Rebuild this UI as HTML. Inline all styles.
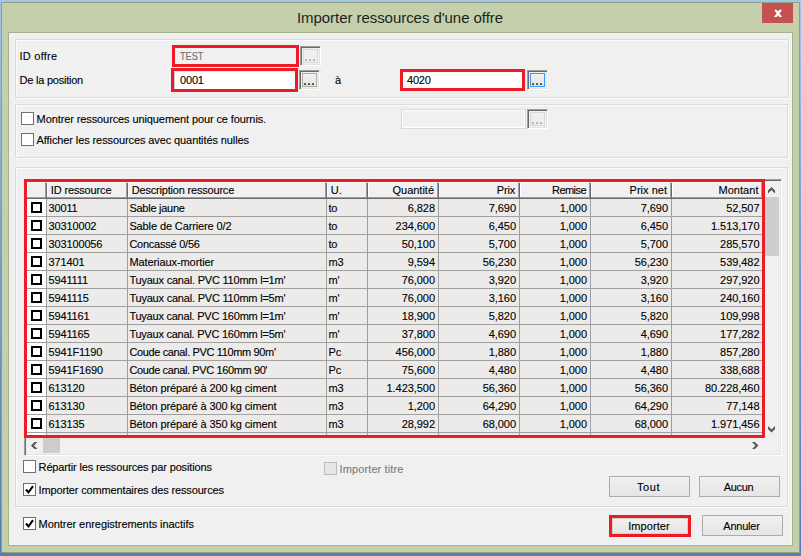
<!DOCTYPE html><html><head><meta charset="utf-8"><title>Importer ressources d'une offre</title><style>html,body{margin:0;padding:0}
body{width:801px;height:556px;position:relative;overflow:hidden;background:linear-gradient(#a3c6ee,#729bc8 49%,#5080b6);font-family:"Liberation Sans",sans-serif;font-size:11px;color:#000;-webkit-text-stroke:0.12px}
div,i,span{box-sizing:content-box}
.win{position:absolute;left:1px;top:2px;width:797px;height:549px;border:1px solid #939f79;background:#c3d0ab}
.title{-webkit-text-stroke:0;position:absolute;left:-0.5px;top:6px;width:797px;text-align:center;font-size:15px;line-height:18px;color:#1e1e1e;letter-spacing:-0.05px}
.close{position:absolute;left:760px;top:0;width:31px;height:20px;background:#c75050}
.close svg{display:block}
.client{position:absolute;left:8px;top:32px;width:783px;height:512px;border:1px solid #a6b28c;background:#f0f0f0;box-shadow:inset -1px -1px 0 #f6f6f8}
.gb{position:absolute;border:1px solid #dcdcdc;box-shadow:1px 1px 0 #fbfbfb, inset 1px 1px 0 #fbfbfb}
.t{position:absolute;white-space:nowrap;line-height:13px;height:13px;letter-spacing:-0.1px}
.t.r{text-align:right}
.dis{color:#6d6d6d}
.dis2{color:#7d7d7d}
.red{position:absolute;border:3px solid #ed1c24}
.redf{position:absolute;border:3px solid #ed1c24}
.inb{position:absolute;left:0;top:0;right:0;bottom:0;border-left:1px solid #c5cbd3;border-top:1px solid #e8eaee}
.sunk{position:absolute;width:19px;height:18px;border:1px solid;border-color:#a0a0a0 #fff #fff #a0a0a0;box-shadow:inset 1px 1px 0 #696969, inset -1px -1px 0 #e3e3e3;background:#f0f0f0}
.db{position:absolute;left:2px;top:2px;width:13px;height:12px;border:1px solid #acacac;background:linear-gradient(#f0f0f0,#e5e5e5);overflow:hidden}
.db span{position:absolute;left:0px;top:0px;font-size:14px;line-height:13px;letter-spacing:0.11px}
.db.d{border-color:#d9d9d9;background:#efefef;color:#9a9a9a}
.db.f{border-color:#3399ff}
.distb{position:absolute;border:1px solid #fff;box-shadow:0 0 0 1px #d9d9d9;background:#f0f0f0;margin:1px}
.cb{position:absolute;width:11px;height:11px;overflow:hidden;border:1px solid #707070;background:#fff}
.cb.x{border-color:#bcbcbc;background:#e6e6e6}
.cb svg{display:block}
.grid{position:absolute;left:27px;top:182px;width:735px;height:253px;background:#fff;overflow:hidden}
.hc{position:absolute;top:0;height:15px;line-height:17px;border-right:1px solid #a0a0a0;border-bottom:1px solid #a0a0a0;box-shadow:1px 1px 0 #696969, inset 1px 1px 0 #fff;background:#f0f0f0;white-space:nowrap;overflow:hidden;text-indent:3.8px;letter-spacing:-0.1px}
.hc.r{text-align:right;text-indent:0;padding-right:3px}
.row{position:absolute;left:0;width:735px;height:18px}
.c0{position:absolute;top:0;height:17px;background:#fff;border-right:1px solid #a0a0a0;border-bottom:1px solid #a0a0a0}
.rcb{position:absolute;left:4px;top:3px;width:7px;height:7px;border:2px solid #000;background:#fff}
.c{position:absolute;top:0;height:17px;line-height:19px;background:#ecebea;border-right:1px solid #a0a0a0;border-bottom:1px solid #a0a0a0;white-space:nowrap;overflow:hidden;letter-spacing:-0.1px}
.c>span{padding-left:1.4px}
.c.r{text-align:right}
.c.r>span{padding-right:3px}
.gframe{position:absolute;left:24px;top:179px;width:756px;height:275px;border:1px solid;border-color:#a0a0a0 #fff #fff #a0a0a0;box-shadow:inset 1px 1px 0 #696969, inset -1px -1px 0 #e3e3e3;background:#f0f0f0}
.vsb{position:absolute;left:765px;top:181px;width:15px;height:257px;background:#f0f0f0}
.vsb svg,.hsb svg{position:absolute;display:block}
.au{left:3px;top:6px}
.ad{left:3px;top:245px}
.vth{position:absolute;left:0;top:16px;width:14px;height:59px;background:#cdcdcd}
.hsb{position:absolute;left:26px;top:438px;width:739px;height:16px;background:#f0f0f0}
.al{left:5px;top:4px}
.ar{left:726px;top:4px}
.hth{position:absolute;left:17px;top:0;width:17px;height:15px;background:#cdcdcd}
.btn{position:absolute;border:1px solid #acacac;background:linear-gradient(#f0f0f0,#e5e5e5);text-align:center;letter-spacing:-0.05px}
.hl{position:absolute;left:0;top:16px;width:735px;height:1px;background:#696969}
</style></head><body>
<div class="win"><div class="title">Importer ressources d'une offre</div>
<div class="close"><svg width="31" height="20" viewBox="0 0 31 20"><clipPath id="cx"><rect x="0" y="6.8" width="31" height="7.2"/></clipPath><path clip-path="url(#cx)" d="M13 6.3L19.1 14.5M19.1 6.3L13 14.5" stroke="#fff" stroke-width="2.2" fill="none"/></svg></div>
</div>
<div class="client"></div>
<div class="gb" style="left:15px;top:39px;width:772px;height:57px"></div>
<div class="gb" style="left:15px;top:104px;width:771px;height:52px"></div>
<div class="gb" style="left:15px;top:167px;width:771px;height:338px"></div>
<div class="t " style="left:19.5px;top:50px;"><span style="letter-spacing:0.241px">ID offre</span></div>
<div class="t " style="left:19.5px;top:74px;"><span style="letter-spacing:-0.225px">De la position</span></div>
<div class="t " style="left:335px;top:74px;">à</div>
<div class="red" style="left:172px;top:45px;width:121px;height:16px;background:#f0f0f0"></div>
<div class="t dis" style="left:180px;top:50px;"><span style="display:inline-block;transform:scaleX(0.84);transform-origin:0 0">TEST</span></div>
<div class="red" style="left:171px;top:68px;width:121px;height:18px;background:#fff"><i class="inb"></i></div>
<div class="t " style="left:180px;top:74px;"><span style="letter-spacing:-0.171px">0001</span></div>
<div class="red" style="left:400px;top:69px;width:119px;height:16px;background:#fff"></div>
<div class="t " style="left:407px;top:74px;"><span style="letter-spacing:-0.221px">4020</span></div>
<div class="sunk" style="left:300px;top:46px"><div class="db d"><span>...</span></div></div>
<div class="sunk" style="left:299px;top:70px"><div class="db n"><span>...</span></div></div>
<div class="sunk" style="left:527px;top:70px"><div class="db f"><span>...</span></div></div>
<div class="sunk" style="left:527px;top:109px"><div class="db d"><span>...</span></div></div>
<div class="distb" style="left:401px;top:109px;width:121px;height:16px"></div>
<div class="cb " style="left:21px;top:112px"></div>
<div class="t " style="left:36.6px;top:113px;"><span style="letter-spacing:-0.102px">Montrer ressources uniquement pour ce fournis.</span></div>
<div class="cb " style="left:21px;top:133px"></div>
<div class="t " style="left:36.6px;top:134px;"><span style="letter-spacing:-0.101px">Afficher les ressources avec quantités nulles</span></div>
<div class="cb " style="left:23px;top:460px"></div>
<div class="t " style="left:38.6px;top:461px;"><span style="letter-spacing:-0.144px">Répartir les ressources par positions</span></div>
<div class="cb ck" style="left:23px;top:483px"><svg width="11" height="11" viewBox="0 0 11 11"><path d="M2 5.5l2.5 2.8L9 2.2" stroke="#000" stroke-width="2" fill="none"/></svg></div>
<div class="t " style="left:38.6px;top:484px;"><span style="letter-spacing:-0.154px">Importer commentaires des ressources</span></div>
<div class="cb ck" style="left:23px;top:517px"><svg width="11" height="11" viewBox="0 0 11 11"><path d="M2 5.5l2.5 2.8L9 2.2" stroke="#000" stroke-width="2" fill="none"/></svg></div>
<div class="t " style="left:38.6px;top:518px;"><span style="letter-spacing:-0.057px">Montrer enregistrements inactifs</span></div>
<div class="cb x" style="left:324px;top:462px"></div>
<div class="t dis2" style="left:339.5px;top:463px;"><span style="letter-spacing:0.117px">Importer titre</span></div>
<div class="gframe"></div>
<div class="grid">
<div class="hc " style="left:0px;width:18px;padding-right:0px"></div>
<div class="hc " style="left:20px;width:79px;padding-right:0px"><span style="letter-spacing:-0.147px">ID ressource</span></div>
<div class="hc " style="left:101px;width:197px;padding-right:0px"><span style="letter-spacing:-0.194px">Description ressource</span></div>
<div class="hc " style="left:300px;width:39px;padding-right:0px">U.</div>
<div class="hc r" style="left:341px;width:66px;padding-right:3px"><span style="letter-spacing:-0.012px">Quantité</span></div>
<div class="hc r" style="left:412px;width:76px;padding-right:3px"><span style="letter-spacing:-0.188px">Prix</span></div>
<div class="hc r" style="left:493px;width:66px;padding-right:3px"><span style="letter-spacing:-0.549px">Remise</span></div>
<div class="hc r" style="left:564px;width:76px;padding-right:3px"><span style="letter-spacing:0.013px">Prix net</span></div>
<div class="hc r" style="left:645px;width:86.5px;padding-right:2.5px"><span style="letter-spacing:0.036px">Montant</span></div>
<div class="hl"></div>
<div class="row" style="top:17px">
<div class="c0" style="left:0;width:19px"><i class="rcb"></i></div>
<div class="c " style="left:20px;width:80px"><span><span style="letter-spacing:-0.12px">30011</span></span></div>
<div class="c " style="left:101px;width:198px"><span><span style="letter-spacing:-0.255px">Sable jaune</span></span></div>
<div class="c " style="left:300px;width:40px"><span><span style="letter-spacing:-0.1px">to</span></span></div>
<div class="c r" style="left:341px;width:70px"><span><span style="letter-spacing:-0.05px">6,828</span></span></div>
<div class="c r" style="left:412px;width:80px"><span><span style="letter-spacing:-0.05px">7,690</span></span></div>
<div class="c r" style="left:493px;width:70px"><span><span style="letter-spacing:-0.05px">1,000</span></span></div>
<div class="c r" style="left:564px;width:80px"><span><span style="letter-spacing:-0.05px">7,690</span></span></div>
<div class="c r" style="left:645px;width:90px"><span style="padding-right:2.5px"><span style="letter-spacing:-0.05px">52,507</span></span></div>
</div>
<div class="row" style="top:35px">
<div class="c0" style="left:0;width:19px"><i class="rcb"></i></div>
<div class="c " style="left:20px;width:80px"><span><span style="letter-spacing:-0.12px">30310002</span></span></div>
<div class="c " style="left:101px;width:198px"><span><span style="letter-spacing:-0.117px">Sable de Carriere 0/2</span></span></div>
<div class="c " style="left:300px;width:40px"><span><span style="letter-spacing:-0.1px">to</span></span></div>
<div class="c r" style="left:341px;width:70px"><span><span style="letter-spacing:-0.05px">234,600</span></span></div>
<div class="c r" style="left:412px;width:80px"><span><span style="letter-spacing:-0.05px">6,450</span></span></div>
<div class="c r" style="left:493px;width:70px"><span><span style="letter-spacing:-0.05px">1,000</span></span></div>
<div class="c r" style="left:564px;width:80px"><span><span style="letter-spacing:-0.05px">6,450</span></span></div>
<div class="c r" style="left:645px;width:90px"><span style="padding-right:2.5px"><span style="letter-spacing:-0.05px">1.513,170</span></span></div>
</div>
<div class="row" style="top:53px">
<div class="c0" style="left:0;width:19px"><i class="rcb"></i></div>
<div class="c " style="left:20px;width:80px"><span><span style="letter-spacing:-0.12px">303100056</span></span></div>
<div class="c " style="left:101px;width:198px"><span><span style="letter-spacing:-0.238px">Concassé 0/56</span></span></div>
<div class="c " style="left:300px;width:40px"><span><span style="letter-spacing:-0.1px">to</span></span></div>
<div class="c r" style="left:341px;width:70px"><span><span style="letter-spacing:-0.05px">50,100</span></span></div>
<div class="c r" style="left:412px;width:80px"><span><span style="letter-spacing:-0.05px">5,700</span></span></div>
<div class="c r" style="left:493px;width:70px"><span><span style="letter-spacing:-0.05px">1,000</span></span></div>
<div class="c r" style="left:564px;width:80px"><span><span style="letter-spacing:-0.05px">5,700</span></span></div>
<div class="c r" style="left:645px;width:90px"><span style="padding-right:2.5px"><span style="letter-spacing:-0.05px">285,570</span></span></div>
</div>
<div class="row" style="top:71px">
<div class="c0" style="left:0;width:19px"><i class="rcb"></i></div>
<div class="c " style="left:20px;width:80px"><span><span style="letter-spacing:-0.12px">371401</span></span></div>
<div class="c " style="left:101px;width:198px"><span><span style="letter-spacing:-0.082px">Materiaux-mortier</span></span></div>
<div class="c " style="left:300px;width:40px"><span><span style="letter-spacing:-0.1px">m3</span></span></div>
<div class="c r" style="left:341px;width:70px"><span><span style="letter-spacing:-0.05px">9,594</span></span></div>
<div class="c r" style="left:412px;width:80px"><span><span style="letter-spacing:-0.05px">56,230</span></span></div>
<div class="c r" style="left:493px;width:70px"><span><span style="letter-spacing:-0.05px">1,000</span></span></div>
<div class="c r" style="left:564px;width:80px"><span><span style="letter-spacing:-0.05px">56,230</span></span></div>
<div class="c r" style="left:645px;width:90px"><span style="padding-right:2.5px"><span style="letter-spacing:-0.05px">539,482</span></span></div>
</div>
<div class="row" style="top:89px">
<div class="c0" style="left:0;width:19px"><i class="rcb"></i></div>
<div class="c " style="left:20px;width:80px"><span><span style="letter-spacing:-0.12px">5941111</span></span></div>
<div class="c " style="left:101px;width:198px"><span><span style="letter-spacing:-0.206px">Tuyaux canal. PVC 110mm l=1m'</span></span></div>
<div class="c " style="left:300px;width:40px"><span><span style="letter-spacing:-0.1px">m'</span></span></div>
<div class="c r" style="left:341px;width:70px"><span><span style="letter-spacing:-0.05px">76,000</span></span></div>
<div class="c r" style="left:412px;width:80px"><span><span style="letter-spacing:-0.05px">3,920</span></span></div>
<div class="c r" style="left:493px;width:70px"><span><span style="letter-spacing:-0.05px">1,000</span></span></div>
<div class="c r" style="left:564px;width:80px"><span><span style="letter-spacing:-0.05px">3,920</span></span></div>
<div class="c r" style="left:645px;width:90px"><span style="padding-right:2.5px"><span style="letter-spacing:-0.05px">297,920</span></span></div>
</div>
<div class="row" style="top:107px">
<div class="c0" style="left:0;width:19px"><i class="rcb"></i></div>
<div class="c " style="left:20px;width:80px"><span><span style="letter-spacing:-0.12px">5941115</span></span></div>
<div class="c " style="left:101px;width:198px"><span><span style="letter-spacing:-0.206px">Tuyaux canal. PVC 110mm l=5m'</span></span></div>
<div class="c " style="left:300px;width:40px"><span><span style="letter-spacing:-0.1px">m'</span></span></div>
<div class="c r" style="left:341px;width:70px"><span><span style="letter-spacing:-0.05px">76,000</span></span></div>
<div class="c r" style="left:412px;width:80px"><span><span style="letter-spacing:-0.05px">3,160</span></span></div>
<div class="c r" style="left:493px;width:70px"><span><span style="letter-spacing:-0.05px">1,000</span></span></div>
<div class="c r" style="left:564px;width:80px"><span><span style="letter-spacing:-0.05px">3,160</span></span></div>
<div class="c r" style="left:645px;width:90px"><span style="padding-right:2.5px"><span style="letter-spacing:-0.05px">240,160</span></span></div>
</div>
<div class="row" style="top:125px">
<div class="c0" style="left:0;width:19px"><i class="rcb"></i></div>
<div class="c " style="left:20px;width:80px"><span><span style="letter-spacing:-0.12px">5941161</span></span></div>
<div class="c " style="left:101px;width:198px"><span><span style="letter-spacing:-0.234px">Tuyaux canal. PVC 160mm l=1m'</span></span></div>
<div class="c " style="left:300px;width:40px"><span><span style="letter-spacing:-0.1px">m'</span></span></div>
<div class="c r" style="left:341px;width:70px"><span><span style="letter-spacing:-0.05px">18,900</span></span></div>
<div class="c r" style="left:412px;width:80px"><span><span style="letter-spacing:-0.05px">5,820</span></span></div>
<div class="c r" style="left:493px;width:70px"><span><span style="letter-spacing:-0.05px">1,000</span></span></div>
<div class="c r" style="left:564px;width:80px"><span><span style="letter-spacing:-0.05px">5,820</span></span></div>
<div class="c r" style="left:645px;width:90px"><span style="padding-right:2.5px"><span style="letter-spacing:-0.05px">109,998</span></span></div>
</div>
<div class="row" style="top:143px">
<div class="c0" style="left:0;width:19px"><i class="rcb"></i></div>
<div class="c " style="left:20px;width:80px"><span><span style="letter-spacing:-0.12px">5941165</span></span></div>
<div class="c " style="left:101px;width:198px"><span><span style="letter-spacing:-0.234px">Tuyaux canal. PVC 160mm l=5m'</span></span></div>
<div class="c " style="left:300px;width:40px"><span><span style="letter-spacing:-0.1px">m'</span></span></div>
<div class="c r" style="left:341px;width:70px"><span><span style="letter-spacing:-0.05px">37,800</span></span></div>
<div class="c r" style="left:412px;width:80px"><span><span style="letter-spacing:-0.05px">4,690</span></span></div>
<div class="c r" style="left:493px;width:70px"><span><span style="letter-spacing:-0.05px">1,000</span></span></div>
<div class="c r" style="left:564px;width:80px"><span><span style="letter-spacing:-0.05px">4,690</span></span></div>
<div class="c r" style="left:645px;width:90px"><span style="padding-right:2.5px"><span style="letter-spacing:-0.05px">177,282</span></span></div>
</div>
<div class="row" style="top:161px">
<div class="c0" style="left:0;width:19px"><i class="rcb"></i></div>
<div class="c " style="left:20px;width:80px"><span><span style="letter-spacing:-0.12px">5941F1190</span></span></div>
<div class="c " style="left:101px;width:198px"><span><span style="letter-spacing:-0.359px">Coude canal. PVC 110mm 90m'</span></span></div>
<div class="c " style="left:300px;width:40px"><span><span style="letter-spacing:-0.1px">Pc</span></span></div>
<div class="c r" style="left:341px;width:70px"><span><span style="letter-spacing:-0.05px">456,000</span></span></div>
<div class="c r" style="left:412px;width:80px"><span><span style="letter-spacing:-0.05px">1,880</span></span></div>
<div class="c r" style="left:493px;width:70px"><span><span style="letter-spacing:-0.05px">1,000</span></span></div>
<div class="c r" style="left:564px;width:80px"><span><span style="letter-spacing:-0.05px">1,880</span></span></div>
<div class="c r" style="left:645px;width:90px"><span style="padding-right:2.5px"><span style="letter-spacing:-0.05px">857,280</span></span></div>
</div>
<div class="row" style="top:179px">
<div class="c0" style="left:0;width:19px"><i class="rcb"></i></div>
<div class="c " style="left:20px;width:80px"><span><span style="letter-spacing:-0.12px">5941F1690</span></span></div>
<div class="c " style="left:101px;width:198px"><span><span style="letter-spacing:-0.382px">Coude canal. PVC 160mm 90'</span></span></div>
<div class="c " style="left:300px;width:40px"><span><span style="letter-spacing:-0.1px">Pc</span></span></div>
<div class="c r" style="left:341px;width:70px"><span><span style="letter-spacing:-0.05px">75,600</span></span></div>
<div class="c r" style="left:412px;width:80px"><span><span style="letter-spacing:-0.05px">4,480</span></span></div>
<div class="c r" style="left:493px;width:70px"><span><span style="letter-spacing:-0.05px">1,000</span></span></div>
<div class="c r" style="left:564px;width:80px"><span><span style="letter-spacing:-0.05px">4,480</span></span></div>
<div class="c r" style="left:645px;width:90px"><span style="padding-right:2.5px"><span style="letter-spacing:-0.05px">338,688</span></span></div>
</div>
<div class="row" style="top:197px">
<div class="c0" style="left:0;width:19px"><i class="rcb"></i></div>
<div class="c " style="left:20px;width:80px"><span><span style="letter-spacing:-0.12px">613120</span></span></div>
<div class="c " style="left:101px;width:198px"><span><span style="letter-spacing:-0.119px">Béton préparé à 200 kg ciment</span></span></div>
<div class="c " style="left:300px;width:40px"><span><span style="letter-spacing:-0.1px">m3</span></span></div>
<div class="c r" style="left:341px;width:70px"><span><span style="letter-spacing:-0.05px">1.423,500</span></span></div>
<div class="c r" style="left:412px;width:80px"><span><span style="letter-spacing:-0.05px">56,360</span></span></div>
<div class="c r" style="left:493px;width:70px"><span><span style="letter-spacing:-0.05px">1,000</span></span></div>
<div class="c r" style="left:564px;width:80px"><span><span style="letter-spacing:-0.05px">56,360</span></span></div>
<div class="c r" style="left:645px;width:90px"><span style="padding-right:2.5px"><span style="letter-spacing:-0.05px">80.228,460</span></span></div>
</div>
<div class="row" style="top:215px">
<div class="c0" style="left:0;width:19px"><i class="rcb"></i></div>
<div class="c " style="left:20px;width:80px"><span><span style="letter-spacing:-0.12px">613130</span></span></div>
<div class="c " style="left:101px;width:198px"><span><span style="letter-spacing:-0.119px">Béton préparé à 300 kg ciment</span></span></div>
<div class="c " style="left:300px;width:40px"><span><span style="letter-spacing:-0.1px">m3</span></span></div>
<div class="c r" style="left:341px;width:70px"><span><span style="letter-spacing:-0.05px">1,200</span></span></div>
<div class="c r" style="left:412px;width:80px"><span><span style="letter-spacing:-0.05px">64,290</span></span></div>
<div class="c r" style="left:493px;width:70px"><span><span style="letter-spacing:-0.05px">1,000</span></span></div>
<div class="c r" style="left:564px;width:80px"><span><span style="letter-spacing:-0.05px">64,290</span></span></div>
<div class="c r" style="left:645px;width:90px"><span style="padding-right:2.5px"><span style="letter-spacing:-0.05px">77,148</span></span></div>
</div>
<div class="row" style="top:233px">
<div class="c0" style="left:0;width:19px"><i class="rcb"></i></div>
<div class="c " style="left:20px;width:80px"><span><span style="letter-spacing:-0.12px">613135</span></span></div>
<div class="c " style="left:101px;width:198px"><span><span style="letter-spacing:-0.119px">Béton préparé à 350 kg ciment</span></span></div>
<div class="c " style="left:300px;width:40px"><span><span style="letter-spacing:-0.1px">m3</span></span></div>
<div class="c r" style="left:341px;width:70px"><span><span style="letter-spacing:-0.05px">28,992</span></span></div>
<div class="c r" style="left:412px;width:80px"><span><span style="letter-spacing:-0.05px">68,000</span></span></div>
<div class="c r" style="left:493px;width:70px"><span><span style="letter-spacing:-0.05px">1,000</span></span></div>
<div class="c r" style="left:564px;width:80px"><span><span style="letter-spacing:-0.05px">68,000</span></span></div>
<div class="c r" style="left:645px;width:90px"><span style="padding-right:2.5px"><span style="letter-spacing:-0.05px">1.971,456</span></span></div>
</div>
<div class="row" style="top:251px">
<div class="c0" style="left:0;width:19px"></div>
<div class="c " style="left:20px;width:80px"><span><span style="letter-spacing:-0.12px"></span></span></div>
<div class="c " style="left:101px;width:198px"><span><span style="letter-spacing:-0.1px"></span></span></div>
<div class="c " style="left:300px;width:40px"><span><span style="letter-spacing:-0.1px"></span></span></div>
<div class="c r" style="left:341px;width:70px"><span><span style="letter-spacing:-0.05px"></span></span></div>
<div class="c r" style="left:412px;width:80px"><span><span style="letter-spacing:-0.05px"></span></span></div>
<div class="c r" style="left:493px;width:70px"><span><span style="letter-spacing:-0.05px"></span></span></div>
<div class="c r" style="left:564px;width:80px"><span><span style="letter-spacing:-0.05px"></span></span></div>
<div class="c r" style="left:645px;width:90px"><span style="padding-right:2.5px"><span style="letter-spacing:-0.05px"></span></span></div>
</div>
</div>
<div class="redf" style="left:24px;top:179px;width:735px;height:253px"></div>
<div class="vsb"><svg class="au" width="7" height="7" viewBox="0 0 7 7"><polygon points="0,3.5 3.5,0 7,3.5 7,6.4 3.5,2.9 0,6.4" fill="#555"/></svg><div class="vth"></div><svg class="ad" width="7" height="7" viewBox="0 0 7 7"><polygon points="0,2.9 3.5,6.4 7,2.9 7,0 3.5,3.5 0,0" fill="#555"/></svg></div>
<div class="hsb"><svg class="al" width="7" height="7" viewBox="0 0 7 7"><polygon points="3.5,0 0,3.5 3.5,7 6.4,7 2.9,3.5 6.4,0" fill="#555"/></svg><div class="hth"></div><svg class="ar" width="7" height="7" viewBox="0 0 7 7"><polygon points="2.9,0 6.4,3.5 2.9,7 0,7 3.5,3.5 0,0" fill="#555"/></svg></div>
<div class="btn" style="left:609px;top:476px;width:77px;padding-right:2px;height:19px;line-height:19px;padding-top:1px;height:18px;"><span style="letter-spacing:0.551px">Tout</span></div>
<div class="btn" style="left:699px;top:476px;width:77px;padding-right:2px;height:19px;line-height:19px;padding-top:1px;height:18px;"><span style="letter-spacing:-0.381px">Aucun</span></div>
<div class="btn" style="left:612px;top:518px;width:72px;padding-right:2px;height:14px;line-height:14px;border-color:#d0d0d0"><span style="letter-spacing:0.066px">Importer</span></div>
<div class="redf" style="left:609px;top:515px;width:76px;height:16px"></div>
<div class="btn" style="left:702px;top:515px;width:77px;padding-right:2px;height:19px;line-height:19px;padding-top:1px;height:18px;"><span style="letter-spacing:-0.232px">Annuler</span></div>
</body></html>
